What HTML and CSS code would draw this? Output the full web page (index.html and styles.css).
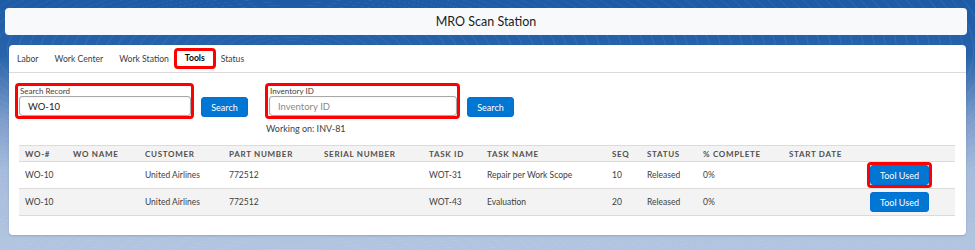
FILE: index.html
```html
<!DOCTYPE html>
<html lang="en">
<head>
  <meta charset="UTF-8">
  <meta name="viewport" content="width=device-width, initial-scale=1.0">
  <title>MRO Scan Station</title>
  <link rel="stylesheet" href="styles.css">
</head>
<body>
  <div class="page-header">
    <h1 class="page-title">MRO Scan Station</h1>
  </div>

  <div class="main-card">
    <ul class="tabs">
      <li class="tab">Labor</li>
      <li class="tab">Work Center</li>
      <li class="tab">Work Station</li>
      <li class="tab tab-active"><span class="mark mark-tab">Tools</span></li>
      <li class="tab">Status</li>
    </ul>

    <div class="search-row">
      <div class="search-block">
        <div class="field-line">
          <div class="field mark field-record">
            <label class="field-label">Search Record</label>
            <input class="field-input" type="text" value="WO-10">
          </div>
          <button class="btn-brand btn-search">Search</button>
        </div>
      </div>

      <div class="search-block">
        <div class="field-line">
          <div class="field mark field-inventory">
            <label class="field-label">Inventory ID</label>
            <input class="field-input" type="text" placeholder="Inventory ID">
          </div>
          <button class="btn-brand btn-search">Search</button>
        </div>
        <div class="working-on">Working on: INV-81</div>
      </div>
    </div>

    <table class="data-table">
      <thead>
        <tr>
          <th>WO-#</th>
          <th>WO Name</th>
          <th>Customer</th>
          <th>Part Number</th>
          <th>Serial Number</th>
          <th>Task ID</th>
          <th>Task Name</th>
          <th>Seq</th>
          <th>Status</th>
          <th>% Complete</th>
          <th>Start Date</th>
          <th></th>
        </tr>
      </thead>
      <tbody>
        <tr>
          <td>WO-10</td>
          <td></td>
          <td>United Airlines</td>
          <td>772512</td>
          <td></td>
          <td>WOT-31</td>
          <td>Repair per Work Scope</td>
          <td>10</td>
          <td>Released</td>
          <td>0%</td>
          <td></td>
          <td><span class="mark mark-btn"><button class="btn-brand btn-row">Tool Used</button></span></td>
        </tr>
        <tr>
          <td>WO-10</td>
          <td></td>
          <td>United Airlines</td>
          <td>772512</td>
          <td></td>
          <td>WOT-43</td>
          <td>Evaluation</td>
          <td>20</td>
          <td>Released</td>
          <td>0%</td>
          <td></td>
          <td><button class="btn-brand btn-row">Tool Used</button></td>
        </tr>
      </tbody>
    </table>
  </div>
</body>
</html>
```

FILE: styles.css
```css
body {
  margin: 0;
  padding: 0;
  height: 250px;
  overflow: hidden;
  font-family: Lato, "Open Sans", sans-serif;
  color: #3e3e3c;
  background-color: #b2c5e0;
  background-image:
    repeating-radial-gradient(ellipse at 30% 20%, rgba(255, 255, 255, 0) 0, rgba(255, 255, 255, 0) 9px, rgba(255, 255, 255, 0.08) 10px, rgba(255, 255, 255, 0) 11px),
    linear-gradient(#1d5ba7 0, #2863ab 55px, #7d9dcb 120px, #a6bbdc 170px, #b2c5e0 250px);
}

.page-header {
  margin: 8px 8px 0 5px;
  height: 27px;
  background: #f8f9fb;
  border-radius: 4px;
  display: flex;
  align-items: center;
  justify-content: center;
}

.page-title {
  margin: 0;
  font-size: 12.5px;
  font-weight: 400;
  color: #1c1c1c;
}

.main-card {
  margin: 10px 9px 0 9px;
  height: 190px;
  background: #fff;
  border-radius: 4px;
  box-shadow: 0 1px 2px rgba(0, 0, 0, 0.15);
  padding: 0 10px;
  box-sizing: border-box;
}

/* tabs */
.tabs {
  list-style: none;
  margin: 0 -10px;
  padding: 0 0 0 8px;
  height: 27px;
  display: flex;
  align-items: center;
  gap: 16px;
  border-bottom: 1px solid #dddbda;
  font-size: 8.6px;
}

.tab {
  color: #3e3e3c;
  white-space: nowrap;
}

.tab-active {
  font-weight: 700;
  color: #080707;
}

.mark {
  border: 3px solid #f00;
  border-radius: 4px;
}

.mark-tab {
  display: inline-block;
  line-height: 11px;
  padding: 2px 8px 2px;
  margin: 0 -11px;
}

/* search */
.search-row {
  display: flex;
  align-items: flex-start;
  gap: 17px;
  margin: 10px 0 0 -4px;
}

.field-line {
  display: flex;
  align-items: flex-end;
  gap: 7px;
}

.field {
  display: flex;
  flex-direction: column;
  padding: 0 0 0 1px;
}

.field-record {
  width: 172px;
}

.field-inventory {
  width: 188px;
}

.field-label {
  font-size: 8px;
  line-height: 10px;
  color: #3e3e3c;
  padding-left: 1px;
}

.field-input {
  height: 20px;
  box-sizing: border-box;
  border: 1px solid #a8a8a8;
  border-radius: 3px;
  padding: 0 8px;
  font-family: inherit;
  font-size: 9.5px;
  color: #1c1c1c;
  box-shadow: inset 0 0 1px rgba(0, 0, 0, 0.25);
}

.field-input::placeholder {
  color: #8a8a8a;
}

.btn-brand {
  height: 20px;
  padding: 0;
  border: 1px solid #0070d2;
  border-radius: 3px;
  background: #0176d3;
  color: #fff;
  font-family: inherit;
  font-size: 9px;
  cursor: pointer;
}

.btn-search {
  width: 47px;
  margin-bottom: 2px;
}

.working-on {
  font-size: 9px;
  margin: 4px 0 0 1px;
}

/* table */
.data-table {
  width: 936px;
  margin-top: 11px;
  border-collapse: collapse;
  table-layout: fixed;
  font-size: 8.5px;
}

.data-table th,
.data-table td {
  box-sizing: border-box;
  padding: 0 6px;
  text-align: left;
  white-space: nowrap;
  overflow: hidden;
}

.data-table th {
  height: 16px;
  text-transform: uppercase;
  letter-spacing: 0.7px;
  font-size: 8px;
  font-weight: 700;
  color: #514f4d;
  background: #f3f3f3;
  border-top: 1px solid #dddbda;
  border-bottom: 1px solid #dddbda;
}

.data-table td {
  height: 27px;
  border-bottom: 1px solid #dddbda;
}

.data-table tbody tr:nth-child(2) td {
  background: #f3f3f3;
}

.data-table th:nth-child(1) { width: 48px; }
.data-table th:nth-child(2) { width: 72px; }
.data-table th:nth-child(3) { width: 84px; }
.data-table th:nth-child(4) { width: 95px; }
.data-table th:nth-child(5) { width: 105px; }
.data-table th:nth-child(6) { width: 58px; }
.data-table th:nth-child(7) { width: 125px; }
.data-table th:nth-child(8) { width: 35px; }
.data-table th:nth-child(9) { width: 56px; }
.data-table th:nth-child(10) { width: 86px; }
.data-table th:nth-child(11) { width: 77px; }

.data-table td:last-child {
  padding-left: 10px;
  overflow: visible;
}

.btn-row {
  width: 59px;
  display: block;
}

.mark-btn {
  display: inline-block;
  margin: -3px;
}
```
